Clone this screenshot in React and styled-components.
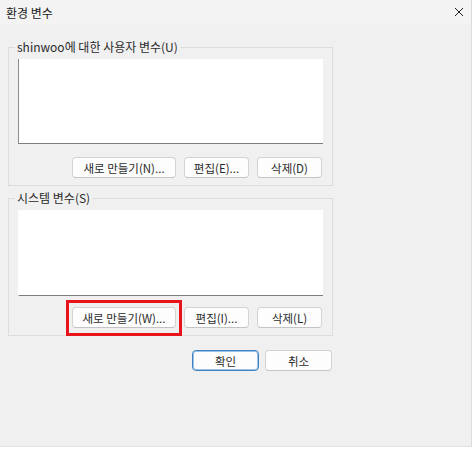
import styled, { createGlobalStyle } from "styled-components";

const GlobalStyle = createGlobalStyle`
  html, body {
    margin: 0;
    padding: 0;
    background: #ffffff;
  }
  body {
    font-family: "Noto Sans CJK KR", "Noto Sans", "Liberation Sans", sans-serif;
    font-size: 12px;
    color: #1a1a1a;
  }
`;

const Window = styled.div`
  width: 472px;
  height: 447px;
  background: #f0f0f0;
  border-right: 1px solid #dcdcdc;
  border-bottom: 1px solid #e2e2e2;
  display: flex;
  flex-direction: column;
  box-sizing: border-box;
`;

const TitleBar = styled.div`
  height: 24px;
  flex: none;
  display: flex;
  align-items: center;
  justify-content: space-between;
  padding: 0 5px 0 6px;
  background: #f3f3f3;
  font-size: 12px;
  color: #1a1a1a;
`;

const CloseIcon = styled.svg`
  width: 10px;
  height: 10px;
  margin-right: 2px;
`;

const Body = styled.div`
  padding: 15px 0 0 8px;
  display: flex;
  flex-direction: column;
  width: 325px;
`;

const Group = styled.fieldset`
  margin: ${(p) => p.$top || 0}px 0 0 0;
  padding: 4px 9px 7px 9px;
  border: 1px solid #dcdcdc;
  border-radius: 0;
  min-width: 0;
  display: flex;
  flex-direction: column;
`;

const Legend = styled.legend`
  padding: 0 2px;
  margin-left: -3px;
  line-height: 16px;
  font-size: 12px;
  color: #2a2a2a;
`;

const ListBox = styled.div`
  height: ${(p) => p.$h}px;
  background: #ffffff;
  border-left: 1px solid ${(p) => (p.$leftLine ? "#8c8c8c" : "#ffffff")};
  border-bottom: 1px solid #7e7e7e;
  box-sizing: border-box;
`;

const ButtonRow = styled.div`
  display: flex;
  justify-content: flex-end;
  gap: ${(p) => p.$gap || 8}px;
  margin-top: ${(p) => p.$top || 13}px;
  padding-right: ${(p) => p.$right || 1}px;
`;

const Button = styled.button`
  width: ${(p) => p.$w}px;
  flex: none;
  height: 21px;
  box-sizing: border-box;
  background: #fdfdfd;
  border: 1px solid ${(p) => (p.$primary ? "#3d84c6" : "#d3d3d3")};
  border-bottom-color: ${(p) => (p.$primary ? "#3d84c6" : "#c4c4c4")};
  box-shadow: ${(p) => (p.$primary ? "inset 0 0 0 1px #9cc3e6" : "none")};
  border-radius: 4px;
  font-family: inherit;
  font-size: 11.5px;
  color: #2a2a2a;
  padding: 0;
  display: flex;
  align-items: center;
  justify-content: center;
`;

const Highlight = styled.div`
  position: relative;
  display: flex;

  &::after {
    content: "";
    position: absolute;
    left: -6px;
    right: -6px;
    top: -7px;
    bottom: -8px;
    border: 3px solid #e8141b;
    pointer-events: none;
  }
`;

export default function App() {
  return (
    <>
      <GlobalStyle />
      <Window>
        <TitleBar>
          <span>환경 변수</span>
          <CloseIcon viewBox="0 0 10 10">
            <path d="M1 1 L9 9 M9 1 L1 9" stroke="#222" strokeWidth="1" fill="none" />
          </CloseIcon>
        </TitleBar>
        <Body>
          <Group>
            <Legend>shinwoo에 대한 사용자 변수(U)</Legend>
            <ListBox $h={85} $leftLine />
            <ButtonRow>
              <Button $w={104}>새로 만들기(N)...</Button>
              <Button $w={65}>편집(E)...</Button>
              <Button $w={65}>삭제(D)</Button>
            </ButtonRow>
          </Group>
          <Group $top={4}>
            <Legend>시스템 변수(S)</Legend>
            <ListBox $h={86} />
            <ButtonRow $top={11}>
              <Highlight>
                <Button $w={104}>새로 만들기(W)...</Button>
              </Highlight>
              <Button $w={65}>편집(I)...</Button>
              <Button $w={65}>삭제(L)</Button>
            </ButtonRow>
          </Group>
          <ButtonRow $top={14} $gap={6} $right={1}>
            <Button $w={67} $primary>확인</Button>
            <Button $w={67}>취소</Button>
          </ButtonRow>
        </Body>
      </Window>
    </>
  );
}
